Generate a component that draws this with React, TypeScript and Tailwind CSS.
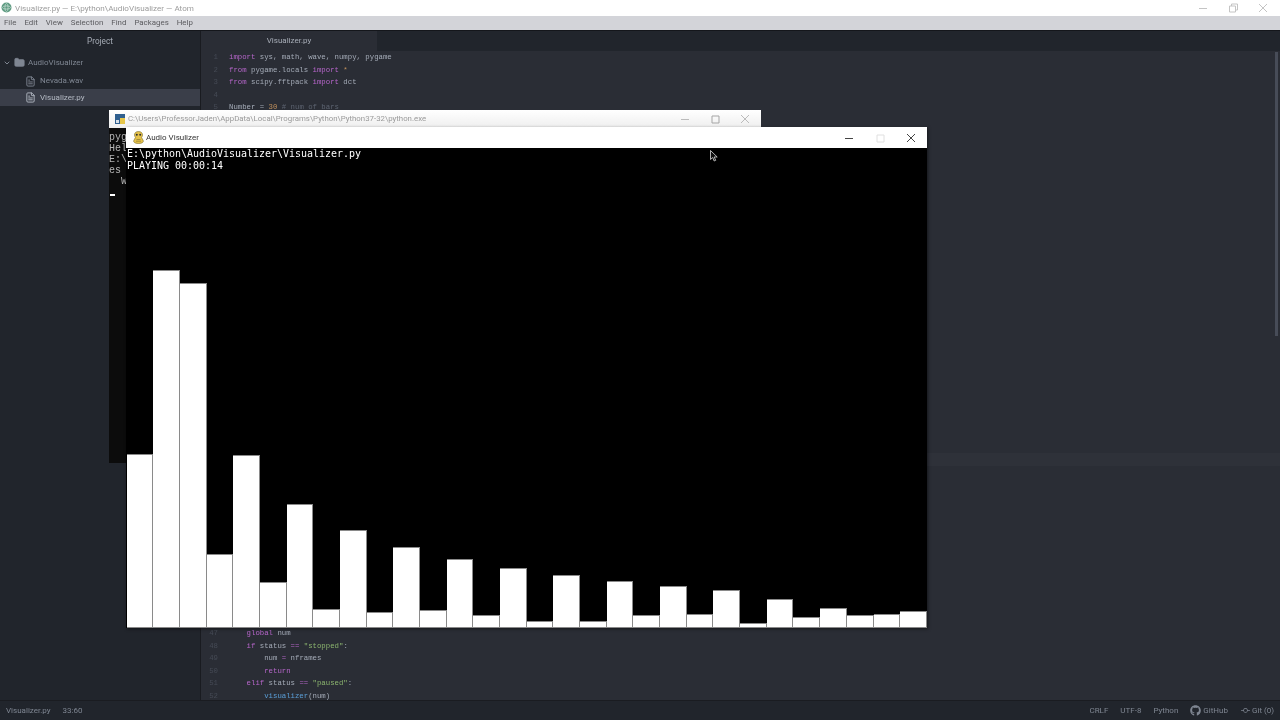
import { ChevronDown, FileText, Folder } from 'lucide-react';
import { FaGithub } from 'react-icons/fa';
import { GoGitCommit } from 'react-icons/go';

const barTops = [
  454, 270, 283, 554, 455, 582, 504, 609, 530, 612, 547, 610, 559, 615, 568, 621, 575, 621, 581, 615, 586, 614, 590,
  623, 599, 617, 608, 615, 614, 611,
];

type Token = { text: string; color?: string };

const KEY = 'text-[#b565c9]';
const STR = 'text-[#8bb46e]';
const NUM = 'text-[#c0905c]';
const FN = 'text-[#5a9fd8]';
const DIM = 'text-[#5c6370]';

const topLines: Token[][] = [
  [{ text: 'import', color: KEY }, { text: ' sys, math, wave, numpy, pygame' }],
  [{ text: 'from', color: KEY }, { text: ' pygame.locals ' }, { text: 'import', color: KEY }, { text: ' *', color: NUM }],
  [{ text: 'from', color: KEY }, { text: ' scipy.fftpack ' }, { text: 'import', color: KEY }, { text: ' dct' }],
  [],
  [{ text: 'Number = ' }, { text: '30', color: NUM }, { text: ' # num of bars', color: DIM }],
];

const bottomLines: Token[][] = [
  [{ text: '    ' }, { text: 'global', color: KEY }, { text: ' num' }],
  [{ text: '    ' }, { text: 'if', color: KEY }, { text: ' status ' }, { text: '==', color: KEY }, { text: ' ' }, { text: '"stopped"', color: STR }, { text: ':' }],
  [{ text: '        num ' }, { text: '=', color: KEY }, { text: ' nframes' }],
  [{ text: '        ' }, { text: 'return', color: KEY }],
  [{ text: '    ' }, { text: 'elif', color: KEY }, { text: ' status ' }, { text: '==', color: KEY }, { text: ' ' }, { text: '"paused"', color: STR }, { text: ':' }],
  [{ text: '        ' }, { text: 'visualizer', color: FN }, { text: '(num)' }],
];

function CodeBlock({ lines, start, className }: { lines: Token[][]; start: number; className?: string }) {
  return (
    <div className={`font-['Liberation_Mono',monospace] text-[7.33px] leading-[12.5px] text-[#a4abb7] ${className ?? ''}`}>
      {lines.map((tokens, i) => (
        <div key={i} className="flex h-[12.5px] whitespace-pre">
          <span className="w-[17px] text-right text-[#454a55]">{start + i}</span>
          <span className="ml-[11px]">
            {tokens.map((t, j) => (
              <span key={j} className={t.color}>
                {t.text}
              </span>
            ))}
          </span>
        </div>
      ))}
    </div>
  );
}

function WinButtons({ stroke, maxStroke, restore, gap }: { stroke: string; maxStroke: string; restore?: boolean; gap: string }) {
  return (
    <div className={`flex items-center ${gap}`}>
      <svg width="10" height="10" viewBox="0 0 10 10" fill="none" stroke={stroke}>
        <path d="M1 5.5h8" />
      </svg>
      {restore ? (
        <svg width="10" height="10" viewBox="0 0 10 10" fill="none" stroke={maxStroke}>
          <path d="M1.5 3h6v6h-6zM3.5 3V1h6v6H7.5" />
        </svg>
      ) : (
        <svg width="10" height="10" viewBox="0 0 10 10" fill="none" stroke={maxStroke}>
          <path d="M2 2h7v7H2z" />
        </svg>
      )}
      <svg width="10" height="10" viewBox="0 0 10 10" fill="none" stroke={stroke}>
        <path d="M1 1l8 8M9 1l-8 8" />
      </svg>
    </div>
  );
}

function AtomIcon() {
  return (
    <svg width="11" height="11" viewBox="0 0 11 11" className="shrink-0">
      <circle cx="5.5" cy="5.5" r="5" fill="#5f9c83" />
      <ellipse cx="5.5" cy="5.5" rx="4" ry="1.6" fill="none" stroke="#d6e8df" strokeWidth="0.6" />
      <ellipse cx="5.5" cy="5.5" rx="1.6" ry="4" fill="none" stroke="#d6e8df" strokeWidth="0.6" />
    </svg>
  );
}

function PythonIcon() {
  return (
    <svg width="10" height="10" viewBox="0 0 10 10" className="shrink-0">
      <rect x="0" y="0" width="10" height="10" fill="#2f5f8f" />
      <rect x="5" y="4" width="5" height="6" fill="#e6c64a" />
      <rect x="1" y="6" width="3" height="3" fill="#d8dfe6" />
    </svg>
  );
}

function PygameIcon() {
  return (
    <svg width="11" height="13" viewBox="0 0 11 13" className="shrink-0">
      <path d="M5.5.5C8.2.500 9.500 2 9.500 4c0 1-.4 1.800-1 2.300l1.800 3.500c.3 1.200-1 2.700-4.800 2.700S.4 11 .7 9.800l1.800-3.500c-.6-.5-1-1.300-1-2.300 0-2 1.300-3.500 4-3.500z" fill="#e6c24a" stroke="#77692e" strokeWidth="0.6" />
      <circle cx="3.800" cy="3.800" r="1" fill="#2f2f2f" />
      <circle cx="7.200" cy="3.800" r="1" fill="#2f2f2f" />
      <path d="M3.500 8.500h4M3 10.200h5" stroke="#8a7a34" strokeWidth="0.7" />
    </svg>
  );
}

export default function App() {
  return (
    <div className="relative flex h-[720px] w-[1280px] flex-col overflow-hidden bg-[#2a2d35] font-['Roboto',sans-serif] blur-[0.3px]">
      {/* atom title bar */}
      <div className="flex h-4 items-center justify-between bg-white pl-[1px] pr-[12px]">
        <div className="flex items-center gap-[3px] text-[8.1px] text-[#9c9c9c]">
          <AtomIcon />
          <span>Visualizer.py — E:\python\AudioVisualizer — Atom</span>
        </div>
        <WinButtons stroke="#c4c4c4" maxStroke="#c4c4c4" restore gap="gap-[20px]" />
      </div>

      {/* menu */}
      <div className="flex h-[14px] items-center gap-[8px] bg-[#d3d4d9] pl-[4px] text-[7.9px] text-[#5b5b5f]">
        {['File', 'Edit', 'View', 'Selection', 'Find', 'Packages', 'Help'].map((m) => (
          <span key={m}>{m}</span>
        ))}
      </div>

      <div className="flex min-h-0 flex-1 border-t border-[#14161b]">
        {/* tree view */}
        <aside className="w-[200px] shrink-0 bg-[#21252c] text-[8px] text-[#7f8692]">
          <div className="flex h-5 items-center justify-center text-[8.2px] text-[#a6acb6]">Project</div>
          <div className="flex h-[22px] items-center pl-[3px] pt-px">
            <ChevronDown size={8} strokeWidth={3} className="text-[#7f8692]" />
            <Folder size={11} className="ml-[3px] fill-[#7f8692] text-[#7f8692]" />
            <span className="ml-[3px]">AudioVisualizer</span>
          </div>
          <div className="flex h-[16px] items-center pl-[25px]">
            <FileText size={11} />
            <span className="ml-[4px]">Nevada.wav</span>
          </div>
          <div className="flex h-[17px] items-center bg-[#3a3e49] pl-[25px] text-[#b4bac4]">
            <FileText size={11} />
            <span className="ml-[4px]">Visualizer.py</span>
          </div>
        </aside>

        {/* editor */}
        <main className="flex min-w-0 flex-1 flex-col border-l border-[#191b20]">
          <div className="flex h-5 shrink-0 bg-[#21252c]">
            <div className="flex w-[176px] items-center justify-center bg-[#2a2d35] text-[8px] text-[#a6acb6]">Visualizer.py</div>
          </div>
          <div className="relative flex min-h-0 flex-1 flex-col justify-between pr-[2px]">
            <CodeBlock lines={topLines} start={1} />
            <CodeBlock lines={bottomLines} start={47} className="-mb-[2px]" />
            <div className="absolute right-[2px] top-[1px] h-[284px] w-[3px] bg-[#474c58]" />
            <div className="absolute left-0 right-0 top-[402px] h-[13px] bg-[#2e3139]" />
          </div>
        </main>
      </div>

      {/* status bar */}
      <footer className="flex h-5 shrink-0 items-center justify-between border-t border-[#1a1c21] bg-[#21252c] pl-[6px] pr-[6px] text-[8px] text-[#7f8692]">
        <div className="flex gap-[12px]">
          <span>Visualizer.py</span>
          <span>33:60</span>
        </div>
        <div className="flex items-center gap-[12px]">
          <span>CRLF</span>
          <span>UTF-8</span>
          <span>Python</span>
          <span className="flex items-center gap-[2px]">
            <FaGithub size={11} />
            GitHub
          </span>
          <span className="flex items-center gap-[1px]">
            <GoGitCommit size={11} />
            Git (0)
          </span>
        </div>
      </footer>

      {/* console window */}
      <div className="absolute left-[109px] top-[110px] flex h-[353px] w-[652px] flex-col">
        <div className="flex h-[18px] items-center justify-between bg-gradient-to-b from-white to-[#eeeeee] pl-[6px] pr-[11px]">
          <div className="flex items-center gap-[3px] text-[7.85px] text-[#9a9a9a]">
            <PythonIcon />
            <span>C:\Users\ProfessorJaden\AppData\Local\Programs\Python\Python37-32\python.exe</span>
          </div>
          <WinButtons stroke="#bbbbbb" maxStroke="#a5a5a5" gap="gap-[20px]" />
        </div>
        <div className="flex-1 bg-[#0c0c0c] pt-[4px] font-['Liberation_Mono',monospace] text-[10px] leading-[11px] whitespace-pre text-[#b4b4b4]">
          <div>pyg</div>
          <div>Hel</div>
          <div>E:\</div>
          <div>es</div>
          <div>  W</div>
          <div className="ml-px mt-[7px] h-[2px] w-[5px] bg-white" />
        </div>
      </div>

      {/* pygame window */}
      <div className="absolute left-[126px] top-[127px] flex w-[801px] flex-col shadow-[1px_1px_3px_rgba(0,0,0,0.5)]">
        <div className="flex h-[21px] items-center justify-between bg-white pl-[7px] pr-[11px]">
          <div className="flex items-center gap-[2px] text-[8px] text-[#333333]">
            <PygameIcon />
            <span>Audio Visulizer</span>
          </div>
          <WinButtons stroke="#444444" maxStroke="#e0e0e0" gap="gap-[21px]" />
        </div>
        <div className="relative flex h-[480px] items-end bg-black pl-[0.7px] pr-[0.3px]">
          <div className="absolute left-px top-0 font-['DejaVu_Sans_Mono',monospace] text-[9.97px] leading-[12px] text-white">
            <div>E:\python\AudioVisualizer\Visualizer.py</div>
            <div>PLAYING 00:00:14</div>
          </div>
          {barTops.map((top, i) => (
            <div
              key={i}
              className="flex-1 border-r border-t border-b border-[#8a8a8a] bg-white"
              style={{ height: 628 - top }}
            />
          ))}
        </div>
      </div>

      {/* mouse pointer */}
      <svg width="8" height="12" viewBox="0 0 8 12" className="absolute left-[710px] top-[150px]">
        <path d="M.5.5v9l2.200-2 1.500 3.500 1.500-.7L4.200 7h3z" fill="#111" stroke="#ddd" strokeWidth="0.8" />
      </svg>
    </div>
  );
}
